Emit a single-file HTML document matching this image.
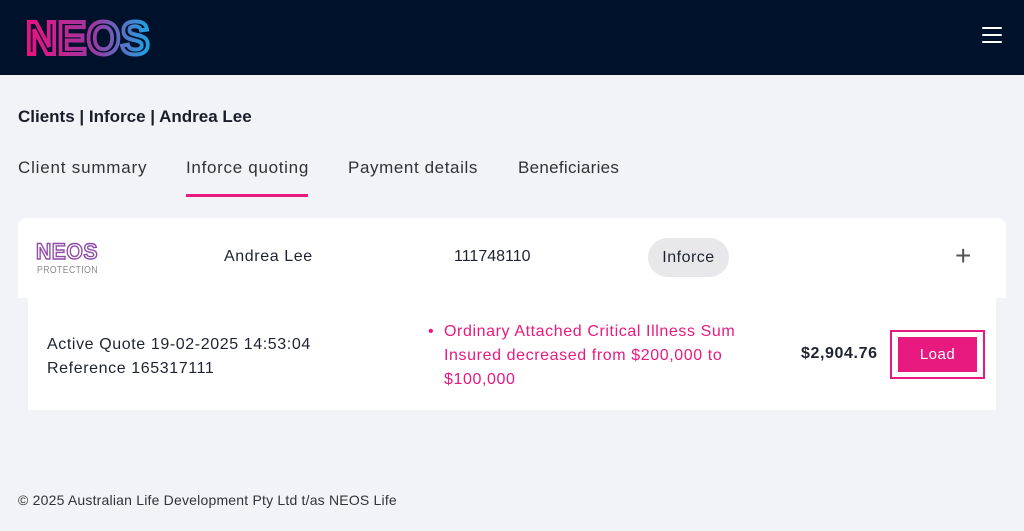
<!DOCTYPE html>
<html><head><meta charset="utf-8"><style>
*{margin:0;padding:0;box-sizing:border-box}
body{width:1024px;height:531px;background:#f2f3f7;font-family:"Liberation Sans",sans-serif;color:#1f2330;position:relative;overflow:hidden;letter-spacing:0.5px}
.hdr{position:absolute;left:0;top:0;width:1024px;height:75px;background:#00112b}
.burger{position:absolute;left:982px;top:27px;width:20px}
.burger div{height:2px;background:#fff;margin-bottom:5px;border-radius:1px}
.abs{position:absolute;white-space:nowrap}
.card{position:absolute;left:18px;top:218px;width:988px;height:80px;background:#fff;border-radius:8px 8px 0 0}
.row{position:absolute;left:28px;top:298px;width:968px;height:112px;background:#fff}
.pill{position:absolute;left:648px;top:238px;width:81px;height:39px;background:#e8e8ea;border-radius:20px;font-size:16px;text-align:center;line-height:39px}
.btn{position:absolute;left:890px;top:330px;width:95px;height:49px;border:2px solid #e8197f;}
.btn div{position:absolute;left:6px;top:5px;width:79px;height:35px;background:#e8197f;color:#fff;font-size:15px;text-align:center;line-height:35px}
</style></head><body>
<div class="hdr">
<svg class="abs" style="left:26px;top:14px" width="130" height="44"><defs><linearGradient id="g" x1="0" x2="1"><stop offset="0" stop-color="#ee0f7f"/><stop offset=".55" stop-color="#9a3aa0"/><stop offset="1" stop-color="#1aa6e6"/></linearGradient></defs>
<text x="0" y="40" font-family="Liberation Sans" font-weight="bold" font-size="46" fill="none" stroke="url(#g)" stroke-width="4" textLength="124" lengthAdjust="spacingAndGlyphs">NEOS</text></svg>
<div class="burger"><div></div><div></div><div></div></div>
</div>
<div class="abs" style="left:18px;top:107px;font-size:17px;font-weight:bold;color:#1a1d29;letter-spacing:0px">Clients | Inforce | Andrea Lee</div>
<div class="abs" style="left:18px;top:158px;font-size:17px;color:#333;letter-spacing:0.8px">Client summary</div>
<div class="abs" style="left:186px;top:158px;font-size:17px;color:#333;letter-spacing:0.7px">Inforce quoting</div>
<div class="abs" style="left:186px;top:194px;width:122px;height:3px;background:#e8197f"></div>
<div class="abs" style="left:348px;top:158px;font-size:17px;color:#333;letter-spacing:0.6px">Payment details</div>
<div class="abs" style="left:518px;top:158px;font-size:17px;color:#333;letter-spacing:0.3px">Beneficiaries</div>
<div class="card"></div>
<svg class="abs" style="left:36px;top:240px" width="66" height="36"><text x="0" y="19" font-family="Liberation Sans" font-weight="bold" font-size="22" fill="none" stroke="#8e4ba8" stroke-width="1.4" textLength="62" lengthAdjust="spacingAndGlyphs">NEOS</text><text x="1" y="33" font-family="Liberation Sans" font-size="10" fill="#8a8a8a" textLength="61" lengthAdjust="spacingAndGlyphs">PROTECTION</text></svg>
<div class="abs" style="left:224px;top:248px;font-size:16px;letter-spacing:0.6px">Andrea Lee</div>
<div class="abs" style="left:454px;top:248px;font-size:16px;letter-spacing:0px">111748110</div>
<div class="pill">Inforce</div>
<div class="abs" style="left:955px;top:240px;font-size:28px;font-weight:300;color:#555">+</div>
<div class="row"></div>
<div class="abs" style="left:47px;top:333px;font-size:16px;line-height:24px;letter-spacing:0.6px">Active Quote 19-02-2025 14:53:04<br>Reference 165317111</div>
<div class="abs" style="left:428px;top:320px;font-size:16px;line-height:24px;color:#e8197f">•</div>
<div class="abs" style="left:444px;top:320px;font-size:16px;line-height:24px;color:#e8197f;letter-spacing:0.6px">Ordinary Attached Critical Illness Sum<br>Insured decreased from $200,000 to<br>$100,000</div>
<div class="abs" style="left:801px;top:345px;font-size:16px;font-weight:bold;letter-spacing:0.6px">$2,904.76</div>
<div class="btn"><div>Load</div></div>
<div class="abs" style="left:18px;top:492px;font-size:14px;color:#333;letter-spacing:0.2px">© 2025 Australian Life Development Pty Ltd t/as NEOS Life</div>
</body></html>
